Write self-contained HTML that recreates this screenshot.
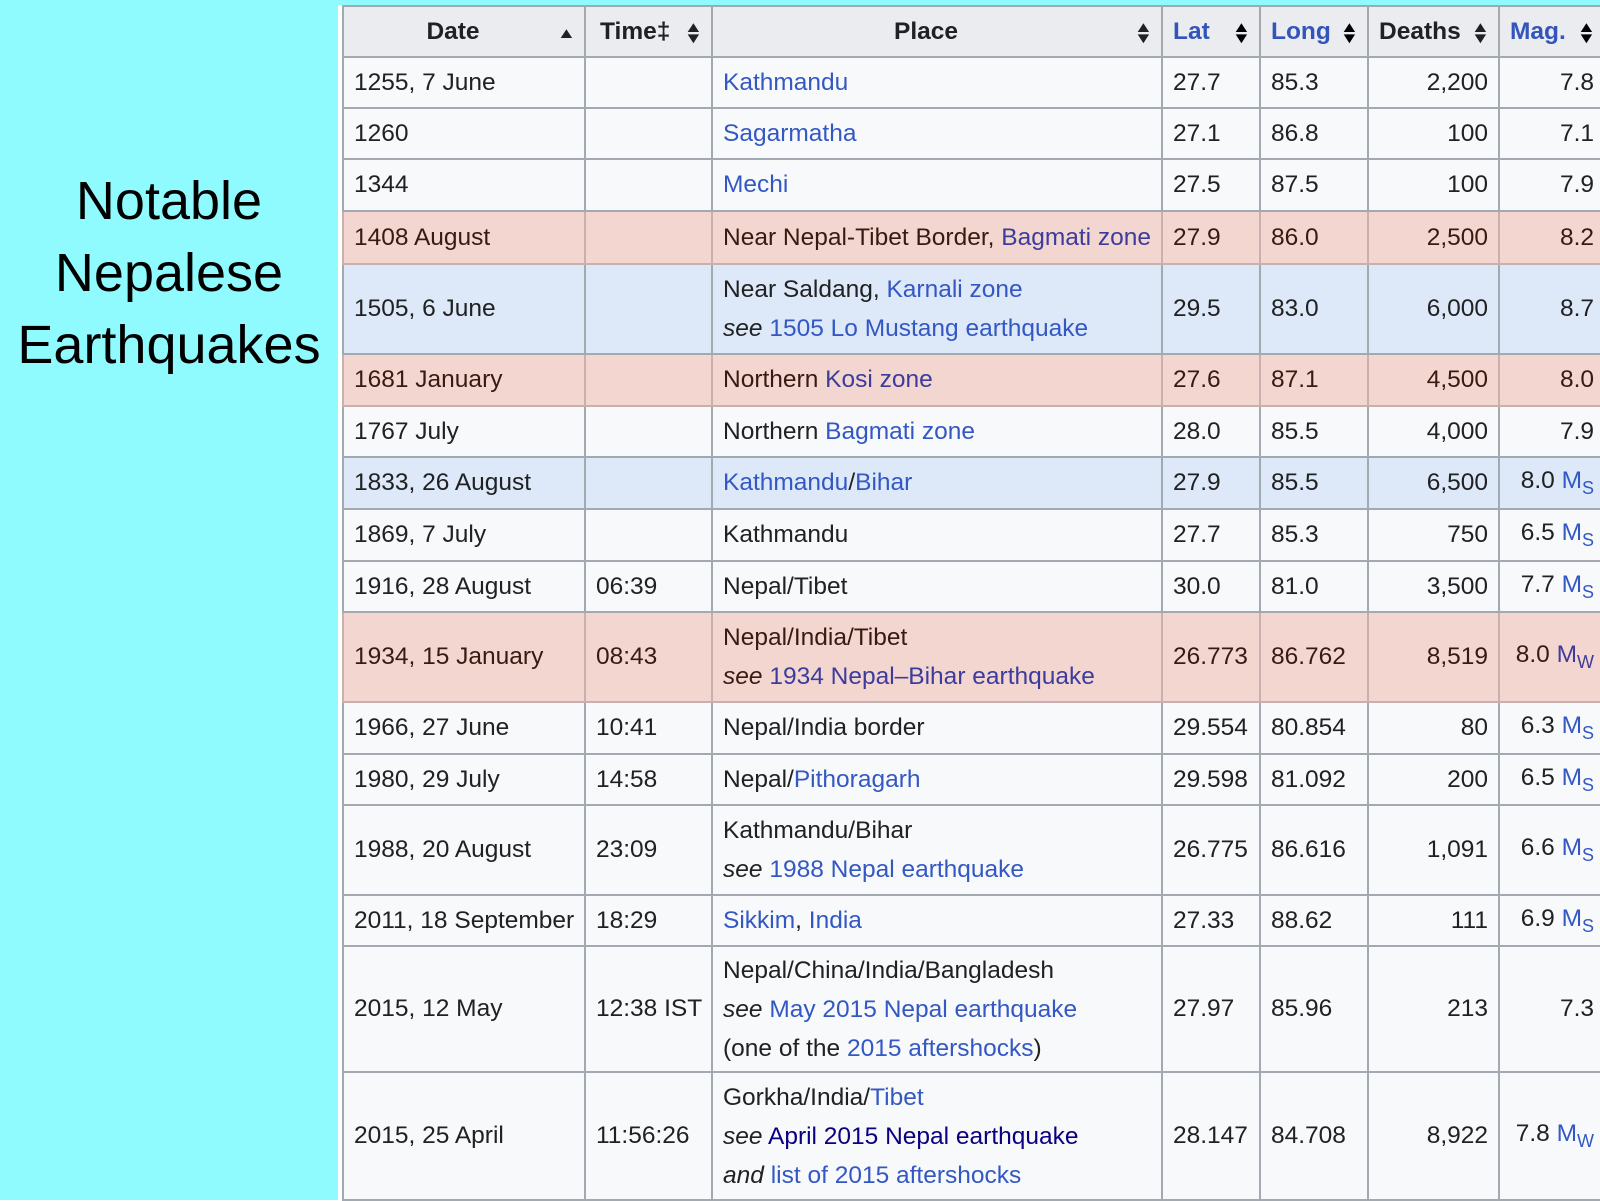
<!DOCTYPE html>
<html><head><meta charset="utf-8"><style>
*{margin:0;padding:0;box-sizing:border-box}
body{width:1600px;height:1200px;background:#fff;font-family:"Liberation Sans",sans-serif;position:relative;overflow:hidden}
#left{position:absolute;left:0;top:0;width:338px;height:1200px;background:#8ffbff}
#topstrip{position:absolute;left:338px;top:0;width:1262px;height:5px;background:#8ffbff}
#title{position:absolute;left:0;top:165px;width:338px;text-align:center;font-size:54px;line-height:72px;color:#000}
table{position:absolute;left:342px;top:5px;width:1262px;border-collapse:collapse;table-layout:fixed;font-size:24.5px;color:#202122}
td,th{border:2px solid #a2a9b1;background:#f8f9fa;padding:0 10px;vertical-align:middle;white-space:nowrap;overflow:hidden}
th{background:#eaecf0;font-weight:bold;position:relative;text-align:center;padding-right:32px}
th .ar{position:absolute;right:10px;top:15px;font-size:15px;line-height:11px;transform:scaleX(1.3)}
th.l{color:#3355bb}
a{color:#3358c4;text-decoration:none}
.r{text-align:right}
.p td{background:#f4d6d0;color:#3a1a10;border-color:#c9b0b0}
.p a{color:#3c3c9c}
.b td{background:#dde8f8}
.ml{line-height:39px}
sub{font-size:18px;vertical-align:-6px}
</style></head><body>
<div id="left"></div><div id="topstrip"></div>
<div id="title">Notable<br>Nepalese<br>Earthquakes</div>
<table>
<colgroup><col style="width:242px"><col style="width:127px"><col style="width:450px"><col style="width:98px"><col style="width:108px"><col style="width:131px"><col style="width:106px"></colgroup>
<tr style="height:51px"><th>Date<span class="ar" style="top:21px">▲</span></th><th style="text-align:left;padding-left:14px">Time‡<span class="ar">▲<br>▼</span></th><th>Place<span class="ar">▲<br>▼</span></th><th class="l" style="text-align:left">Lat<span class="ar" style="color:#000">▲<br>▼</span></th><th class="l" style="text-align:left">Long<span class="ar" style="color:#000">▲<br>▼</span></th><th style="text-align:left">Deaths<span class="ar">▲<br>▼</span></th><th class="l" style="text-align:left">Mag.<span class="ar" style="color:#000">▲<br>▼</span></th></tr>
<tr style="height:51px"><td>1255, 7 June</td><td></td><td><a>Kathmandu</a></td><td>27.7</td><td>85.3</td><td class="r">2,200</td><td class="r">7.8</td></tr>
<tr style="height:51px"><td>1260</td><td></td><td><a>Sagarmatha</a></td><td>27.1</td><td>86.8</td><td class="r">100</td><td class="r">7.1</td></tr>
<tr style="height:52px"><td>1344</td><td></td><td><a>Mechi</a></td><td>27.5</td><td>87.5</td><td class="r">100</td><td class="r">7.9</td></tr>
<tr class="p" style="height:53px"><td>1408 August</td><td></td><td>Near Nepal-Tibet Border, <a>Bagmati zone</a></td><td>27.9</td><td>86.0</td><td class="r">2,500</td><td class="r">8.2</td></tr>
<tr class="b" style="height:90px"><td>1505, 6 June</td><td></td><td class="ml">Near Saldang, <a>Karnali zone</a><br><i>see</i> <a>1505 Lo Mustang earthquake</a></td><td>29.5</td><td>83.0</td><td class="r">6,000</td><td class="r">8.7</td></tr>
<tr class="p" style="height:52px"><td>1681 January</td><td></td><td>Northern <a>Kosi zone</a></td><td>27.6</td><td>87.1</td><td class="r">4,500</td><td class="r">8.0</td></tr>
<tr style="height:51px"><td>1767 July</td><td></td><td>Northern <a>Bagmati zone</a></td><td>28.0</td><td>85.5</td><td class="r">4,000</td><td class="r">7.9</td></tr>
<tr class="b" style="height:52px"><td>1833, 26 August</td><td></td><td><a>Kathmandu</a>/<a>Bihar</a></td><td>27.9</td><td>85.5</td><td class="r">6,500</td><td class="r">8.0 <a>M<sub>S</sub></a></td></tr>
<tr style="height:52px"><td>1869, 7 July</td><td></td><td>Kathmandu</td><td>27.7</td><td>85.3</td><td class="r">750</td><td class="r">6.5 <a>M<sub>S</sub></a></td></tr>
<tr style="height:51px"><td>1916, 28 August</td><td>06:39</td><td>Nepal/Tibet</td><td>30.0</td><td>81.0</td><td class="r">3,500</td><td class="r">7.7 <a>M<sub>S</sub></a></td></tr>
<tr class="p" style="height:90px"><td>1934, 15 January</td><td>08:43</td><td class="ml">Nepal/India/Tibet<br><i>see</i> <a>1934 Nepal–Bihar earthquake</a></td><td>26.773</td><td>86.762</td><td class="r">8,519</td><td class="r">8.0 <a>M<sub>W</sub></a></td></tr>
<tr style="height:52px"><td>1966, 27 June</td><td>10:41</td><td>Nepal/India border</td><td>29.554</td><td>80.854</td><td class="r">80</td><td class="r">6.3 <a>M<sub>S</sub></a></td></tr>
<tr style="height:51px"><td>1980, 29 July</td><td>14:58</td><td>Nepal/<a>Pithoragarh</a></td><td>29.598</td><td>81.092</td><td class="r">200</td><td class="r">6.5 <a>M<sub>S</sub></a></td></tr>
<tr style="height:90px"><td>1988, 20 August</td><td>23:09</td><td class="ml">Kathmandu/Bihar<br><i>see</i> <a>1988 Nepal earthquake</a></td><td>26.775</td><td>86.616</td><td class="r">1,091</td><td class="r">6.6 <a>M<sub>S</sub></a></td></tr>
<tr style="height:51px"><td>2011, 18 September</td><td>18:29</td><td><a>Sikkim</a>, <a>India</a></td><td>27.33</td><td>88.62</td><td class="r">111</td><td class="r">6.9 <a>M<sub>S</sub></a></td></tr>
<tr style="height:126px"><td>2015, 12 May</td><td>12:38 IST</td><td class="ml">Nepal/China/India/Bangladesh<br><i>see</i> <a>May 2015 Nepal earthquake</a><br>(one of the <a>2015 aftershocks</a>)</td><td>27.97</td><td>85.96</td><td class="r">213</td><td class="r">7.3</td></tr>
<tr style="height:128px"><td>2015, 25 April</td><td>11:56:26</td><td class="ml">Gorkha/India/<a>Tibet</a><br><i>see</i> <a style="color:#0b0080">April 2015 Nepal earthquake</a><br><i>and</i> <a>list of 2015 aftershocks</a></td><td>28.147</td><td>84.708</td><td class="r">8,922</td><td class="r">7.8 <a>M<sub>W</sub></a></td></tr>
</table>
</body></html>
